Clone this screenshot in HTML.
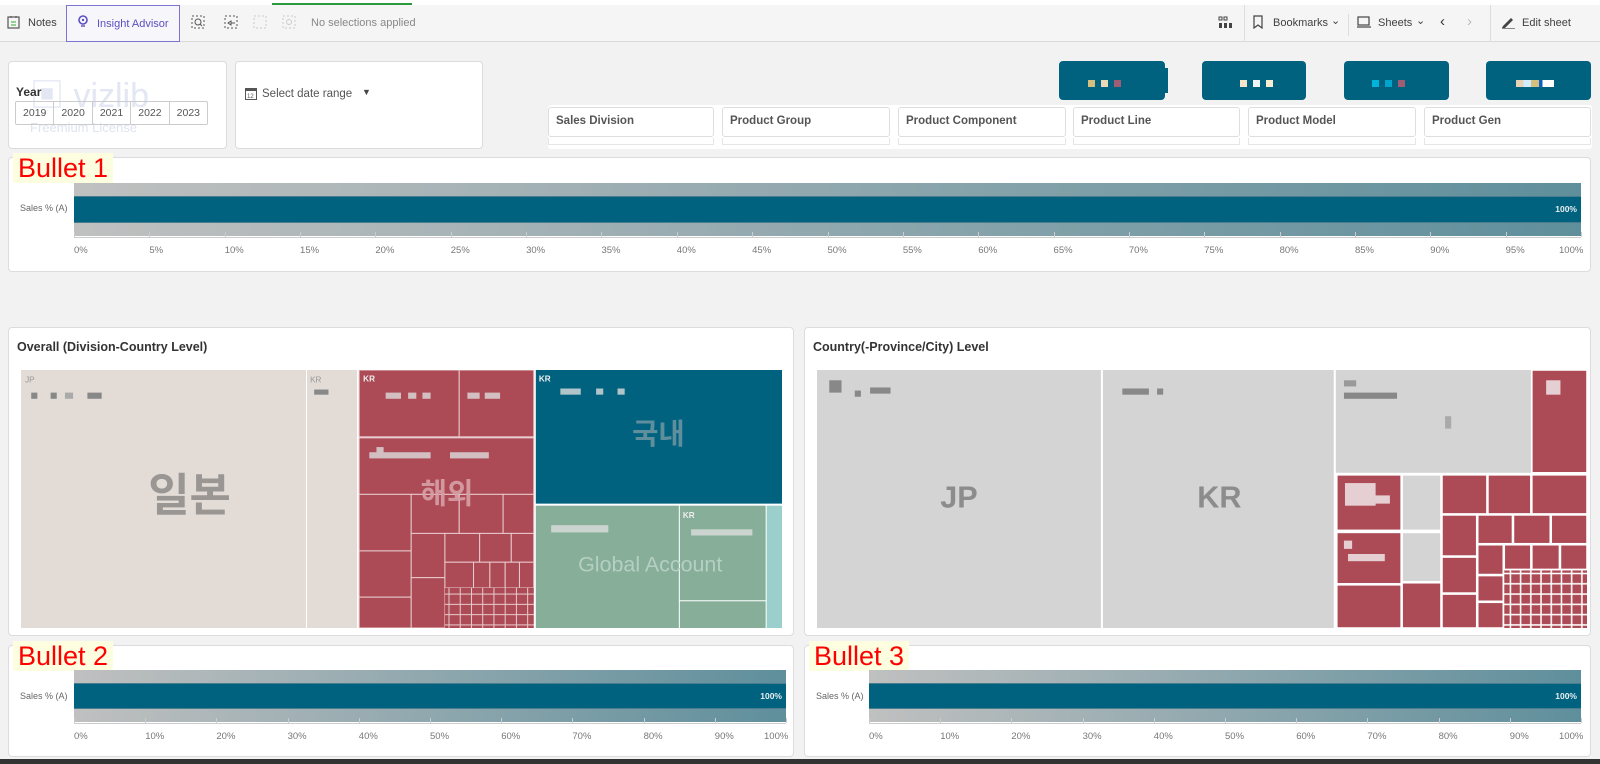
<!DOCTYPE html>
<html><head><meta charset="utf-8"><style>
*{box-sizing:border-box;margin:0;padding:0}
body{width:1600px;height:764px;overflow:hidden;background:#f2f2f2;font-family:"Liberation Sans","Noto Sans CJK KR",sans-serif;position:relative;color:#404040}
.a{position:absolute}
.card{position:absolute;background:#fff;border:1px solid #dcdcdc;border-radius:4px}
.tb{font-size:11px;color:#404040}
.filt{position:absolute;top:107px;height:30px;background:#fff;border:1px solid #dedede;border-radius:3px;font-size:11.5px;font-weight:bold;color:#555;padding:7px 7px}
.filt:after{content:"";position:absolute;left:-1px;right:-1px;bottom:-9px;height:6px;border:1px solid #e6e6e6;border-top:0;background:#fff}
.tbtn{position:absolute;top:61px;height:39px;background:#00627f;border-radius:4px}
.sq{position:absolute;top:19px;width:7px;height:7px}
.blabel{position:absolute;background:#fdfddf;color:#f00;font-size:27px;padding:0 5px;line-height:30px}
.bar{position:absolute}
.bar .bg{position:absolute;left:0;right:0;top:0;bottom:0;background:linear-gradient(90deg,#c0c0c0,#5f8f9c)}
.bar .fg{position:absolute;left:0;right:0;background:#00627f;border-top:1px solid #4a7e8e;border-bottom:1px solid #4a7e8e}
.bar .v{position:absolute;right:4px;color:#e8eef0;font-size:8.5px;font-weight:bold}
.ax{position:absolute;font-size:9.5px;color:#777}
.tick{position:absolute;width:1px;height:5px;background:#ccc}
.ylab{position:absolute;font-size:9px;color:#666}
</style></head><body>
<div class="a" style="left:0;top:0;width:1600px;height:5px;background:#fff"></div>
<div class="a" style="left:272px;top:3px;width:140px;height:2px;background:#2a9a3a"></div>
<div class="a" style="left:0;top:5px;width:1600px;height:37px;background:#f5f5f5;border-bottom:1px solid #d9d9d9"></div>
<svg class="a" style="left:7px;top:15px" width="13" height="14" viewBox="0 0 13 14"><rect x="1" y="2" width="11" height="11" fill="none" stroke="#555" stroke-width="1.2"/><line x1="4" y1="1" x2="4" y2="3" stroke="#555"/><line x1="9" y1="1" x2="9" y2="3" stroke="#555"/><line x1="4" y1="7" x2="9" y2="7" stroke="#3a3"/><line x1="4" y1="10" x2="9" y2="10" stroke="#3a3"/></svg>
<div class="a tb" style="left:28px;top:17px">Notes</div>
<div class="a" style="left:66px;top:5px;width:114px;height:37px;border:1px solid #7b74d0;background:#f7f7fb"></div>
<svg class="a" style="left:77px;top:15px" width="12" height="13" viewBox="0 0 12 13"><circle cx="6" cy="5" r="4" fill="none" stroke="#5a4fc0" stroke-width="1.6"/><circle cx="6" cy="5" r="1.2" fill="#5a4fc0"/><line x1="4" y1="11" x2="8" y2="11" stroke="#5a4fc0" stroke-width="1.4"/></svg>
<div class="a tb" style="left:97px;top:18px;color:#5a4fc0">Insight Advisor</div>
<svg class="a" style="left:191px;top:15px" width="110" height="14" viewBox="0 0 110 14"><g fill="none" stroke-dasharray="2 2"><rect x="1" y="1" width="12" height="12" stroke="#555"/><rect x="34" y="1" width="12" height="12" stroke="#555"/><rect x="63" y="1" width="12" height="12" stroke="#ccc"/><rect x="92" y="1" width="12" height="12" stroke="#ccc"/></g><circle cx="7" cy="7" r="3" fill="none" stroke="#555"/><line x1="9" y1="9" x2="11" y2="11" stroke="#555"/><path d="M37 8 l3-2 v4 z M40 8 h4" stroke="#555" fill="none"/><circle cx="98" cy="7" r="2.5" fill="none" stroke="#ccc"/></svg>
<div class="a tb" style="left:311px;top:17px;color:#888">No selections applied</div>
<svg class="a" style="left:1218px;top:16px" width="14" height="13" viewBox="0 0 14 13"><rect x="1" y="1" width="3" height="3" fill="none" stroke="#444"/><rect x="6" y="1" width="3" height="3" fill="none" stroke="#444"/><rect x="1" y="7" width="3" height="5" fill="#444"/><rect x="6" y="7" width="3" height="5" fill="#444"/><rect x="11" y="7" width="3" height="5" fill="#444"/></svg>
<div class="a" style="left:1244px;top:5px;width:1px;height:37px;background:#ddd"></div>
<svg class="a" style="left:1253px;top:15px" width="10" height="14"><path d="M1 1h8v12l-4-3-4 3z" fill="none" stroke="#444" stroke-width="1.2"/></svg>
<div class="a tb" style="left:1273px;top:17px">Bookmarks</div>
<div class="a tb" style="left:1331px;top:14px;font-size:11px">&#8964;</div>
<div class="a" style="left:1348px;top:14px;width:1px;height:22px;background:#ddd"></div>
<svg class="a" style="left:1357px;top:16px" width="14" height="12"><rect x="1" y="1" width="11" height="8" fill="none" stroke="#444" stroke-width="1.2"/><line x1="0" y1="11" x2="14" y2="11" stroke="#444" stroke-width="1.2"/></svg>
<div class="a tb" style="left:1378px;top:17px">Sheets</div>
<div class="a tb" style="left:1416px;top:14px">&#8964;</div>
<div class="a" style="left:1440px;top:13px;font-size:15px;color:#333">&#8249;</div>
<div class="a" style="left:1467px;top:13px;font-size:15px;color:#bbb">&#8250;</div>
<div class="a" style="left:1490px;top:5px;width:1px;height:37px;background:#ddd"></div>
<svg class="a" style="left:1501px;top:15px" width="14" height="14"><path d="M2 11 L10 3 L12 5 L4 13 L1 13 Z" fill="#444"/><line x1="1" y1="13.5" x2="14" y2="13.5" stroke="#888"/></svg>
<div class="a tb" style="left:1522px;top:17px">Edit sheet</div>

<div class="card" style="left:8px;top:61px;width:219px;height:88px"></div>
<div class="a" style="left:30px;top:68px;font-size:34px;color:#e3e6f3">&#9635; vizlib</div>
<div class="a" style="left:30px;top:120px;font-size:13px;color:#dfe3f0">Freemium License</div>
<div class="a" style="left:16px;top:85px;font-size:12px;font-weight:bold;color:#333">Year</div>
<div class="a" style="left:15px;top:101px;width:193px;height:24px;border:1px solid #ccc;border-radius:2px;display:flex;font-size:10.5px;color:#555">
<div style="flex:1;text-align:center;line-height:22px;border-right:1px solid #ccc">2019</div><div style="flex:1;text-align:center;line-height:22px;border-right:1px solid #ccc">2020</div><div style="flex:1;text-align:center;line-height:22px;border-right:1px solid #ccc">2021</div><div style="flex:1;text-align:center;line-height:22px;border-right:1px solid #ccc">2022</div><div style="flex:1;text-align:center;line-height:22px">2023</div></div>
<div class="card" style="left:235px;top:61px;width:248px;height:88px"></div>
<svg class="a" style="left:245px;top:87px" width="12" height="13"><rect x="0.5" y="1.5" width="11" height="11" fill="none" stroke="#555"/><rect x="0.5" y="1.5" width="11" height="2.5" fill="#555"/><text x="2" y="11" font-size="6" fill="#555" font-family="Liberation Sans">12</text></svg>
<div class="a" style="left:262px;top:88px;font-size:11.5px;color:#555">Select date range</div>
<div class="a" style="left:362px;top:87px;font-size:9px;color:#444">&#9660;</div>

<div class="tbtn" style="left:1059px;width:106px"><div class="sq" style="left:29px;background:#d4c07e"></div><div class="sq" style="left:42px;background:#ead8b8"></div><div class="sq" style="left:55px;background:#9e5d72"></div></div>
<div class="a" style="left:1162px;top:68px;width:6px;height:25px;background:#00627f"></div>
<div class="tbtn" style="left:1202px;width:104px"><div class="sq" style="left:38px;background:#f4e4cb"></div><div class="sq" style="left:51px;background:#eef4f5"></div><div class="sq" style="left:64px;background:#f8ecd2"></div></div>
<div class="tbtn" style="left:1344px;width:105px"><div class="sq" style="left:28px;background:#00b4da"></div><div class="sq" style="left:41px;background:#00a4cc"></div><div class="sq" style="left:54px;background:#9e5d72"></div></div>
<div class="tbtn" style="left:1486px;width:105px"><div class="sq" style="left:30px;width:38px;background:linear-gradient(90deg,#e8d2b6 20%,#cef 20%,#cef 40%,#d4c07e 40%,#d4c07e 60%,#1060c0 60%,#1060c0 70%,#fff 70%)"></div></div>
<div class="a" style="left:548px;top:105px;width:1044px;height:44px;background:#fff;border-radius:3px"></div>
<div class="filt" style="left:548px;width:166px">Sales Division</div>
<div class="filt" style="left:722px;width:168px">Product Group</div>
<div class="filt" style="left:898px;width:168px">Product Component</div>
<div class="filt" style="left:1073px;width:167px">Product Line</div>
<div class="filt" style="left:1248px;width:168px">Product Model</div>
<div class="filt" style="left:1424px;width:167px">Product Gen</div>

<div class="card" style="left:8px;top:157px;width:1583px;height:115px"></div>
<div class="blabel" style="left:13px;top:153px">Bullet 1</div>
<div class="ylab" style="left:20px;top:203px">Sales % (A)</div>
<div class="bar" style="left:74px;top:183px;width:1507px;height:53px"><div class="bg"></div><div class="fg" style="top:13px;height:27px"></div><div class="v" style="top:21px">100%</div></div>
<div class="a" style="left:74px;top:237px;width:1507px;height:1px;background:#ccc"></div>
<div id="ax1"></div>

<div class="card" style="left:8px;top:327px;width:786px;height:309px"></div>
<div class="a" style="left:17px;top:340px;font-size:12.5px;font-weight:bold;color:#333">Overall (Division-Country Level)</div>
<div class="card" style="left:804px;top:327px;width:787px;height:309px"></div>
<div class="a" style="left:813px;top:340px;font-size:12.5px;font-weight:bold;color:#333">Country(-Province/City) Level</div>

<svg class="a" style="left:21px;top:370px" width="761" height="258" viewBox="21 362 745 251" preserveAspectRatio="none">
<defs><pattern id="g" width="11" height="10" patternUnits="userSpaceOnUse"><rect width="11" height="10" fill="#ac4b55" stroke="#e8c9cc" stroke-width="1"/></pattern></defs>
<rect x="21" y="362" width="279" height="251" fill="#e3dcd6"/>
<rect x="301" y="362" width="49" height="251" fill="#e3dcd6"/>
<g fill="#ac4b55" stroke="#e8c9cc" stroke-width="1">
<rect x="352" y="362" width="98" height="65"/><rect x="450" y="362" width="73" height="65"/>
<rect x="352" y="428" width="171" height="55"/>
<rect x="352" y="483" width="51" height="55"/><rect x="352" y="538" width="51" height="45"/><rect x="352" y="583" width="51" height="30"/>
<rect x="403" y="483" width="47" height="38"/><rect x="450" y="483" width="43" height="38"/><rect x="493" y="483" width="30" height="38"/>
<rect x="403" y="521" width="33" height="43"/><rect x="436" y="521" width="34" height="28"/><rect x="470" y="521" width="31" height="28"/><rect x="501" y="521" width="22" height="28"/>
<rect x="403" y="564" width="33" height="49"/><rect x="436" y="549" width="28" height="25"/><rect x="464" y="549" width="16" height="25"/><rect x="480" y="549" width="15" height="25"/><rect x="495" y="549" width="14" height="25"/><rect x="509" y="549" width="14" height="25"/>
</g>
<rect x="436" y="574" width="87" height="39" fill="url(#g)"/>
<rect x="525" y="362" width="241" height="130" fill="#00627f"/>
<rect x="525" y="494" width="140" height="119" fill="#86ae99"/>
<rect x="666" y="494" width="84" height="92" fill="#86ae99"/>
<rect x="666" y="587" width="84" height="26" fill="#86ae99"/>
<rect x="751" y="494" width="15" height="119" fill="#9bcfcb"/>
<g font-family="Liberation Sans" font-size="8" font-weight="bold" fill="#eee"><text x="25" y="374" fill="#999" font-weight="normal">JP</text><text x="304" y="374" fill="#999" font-weight="normal">KR</text><text x="356" y="373">KR</text><text x="528" y="373">KR</text><text x="669" y="506">KR</text></g>
<g fill="#888"><rect x="31" y="384" width="6" height="6"/><rect x="50" y="384" width="6" height="6"/><rect x="64" y="384" width="8" height="6" fill="#aaa"/><rect x="86" y="384" width="14" height="6"/><rect x="308" y="381" width="14" height="5"/></g>
<g fill="#ddd" opacity=".8"><rect x="378" y="384" width="15" height="6"/><rect x="400" y="384" width="8" height="6"/><rect x="414" y="384" width="8" height="6"/><rect x="458" y="384" width="12" height="6"/><rect x="475" y="384" width="15" height="6"/><rect x="369" y="437" width="7" height="6"/><rect x="362" y="442" width="60" height="6"/><rect x="441" y="442" width="38" height="6"/><rect x="549" y="380" width="20" height="6"/><rect x="584" y="380" width="7" height="6"/><rect x="605" y="380" width="7" height="6"/><rect x="540" y="513" width="56" height="7"/><rect x="677" y="517" width="60" height="6"/></g>
<g font-family="Liberation Sans,Noto Sans CJK KR,sans-serif" font-weight="bold" text-anchor="middle">
<text x="186" y="499" font-size="44" fill="#9a9694">일본</text>
<text x="438" y="492" font-size="28" fill="#d8a0a6" opacity=".9">해외</text>
<text x="645" y="434" font-size="28" fill="#5f8f9c">국내</text>
<text x="637" y="558" font-size="21" font-weight="normal" fill="#b5cfc2">Global Account</text>
</g>
</svg>

<svg class="a" style="left:817px;top:370px" width="770" height="258" viewBox="801 362 754 251" preserveAspectRatio="none">
<defs><pattern id="g2" width="10" height="10" patternUnits="userSpaceOnUse"><rect width="10" height="10" fill="#ac4b55" stroke="#fff" stroke-width="1.5"/></pattern></defs>
<rect x="801" y="362" width="278" height="251" fill="#d4d4d4"/>
<rect x="1081" y="362" width="226" height="251" fill="#d4d4d4"/>
<rect x="1309" y="362" width="191" height="100" fill="#d4d4d4"/>
<g fill="#ac4b55" stroke="#fff" stroke-width="1.5">
<rect x="1501" y="362" width="54" height="100"/>
<rect x="1310" y="464" width="63" height="54"/><rect x="1310" y="520" width="63" height="50"/><rect x="1310" y="571" width="63" height="42"/><rect x="1374" y="569" width="38" height="44"/>
<rect x="1413" y="464" width="44" height="38"/><rect x="1458" y="464" width="42" height="38"/><rect x="1501" y="464" width="54" height="38"/>
<rect x="1413" y="503" width="34" height="40"/><rect x="1448" y="503" width="34" height="28"/><rect x="1483" y="503" width="36" height="28"/><rect x="1520" y="503" width="35" height="28"/>
<rect x="1413" y="544" width="34" height="35"/><rect x="1413" y="580" width="34" height="33"/>
<rect x="1448" y="532" width="25" height="29"/><rect x="1474" y="532" width="26" height="24"/><rect x="1501" y="532" width="27" height="24"/><rect x="1529" y="532" width="26" height="24"/>
<rect x="1448" y="562" width="25" height="25"/><rect x="1448" y="588" width="25" height="25"/>
</g>
<g fill="#d4d4d4" stroke="#fff" stroke-width="1.5"><rect x="1374" y="464" width="38" height="54"/><rect x="1374" y="520" width="38" height="48"/></g>
<rect x="1474" y="557" width="81" height="56" fill="url(#g2)"/>
<g fill="#888"><rect x="813" y="372" width="12" height="12"/><rect x="838" y="382" width="6" height="6"/><rect x="853" y="379" width="20" height="6"/><rect x="1100" y="380" width="26" height="6"/><rect x="1134" y="380" width="6" height="6"/><rect x="1317" y="372" width="12" height="6" fill="#999"/><rect x="1317" y="384" width="52" height="6"/><rect x="1416" y="407" width="6" height="12" fill="#aaa"/></g>
<g fill="#e6cfd2"><rect x="1515" y="372" width="14" height="14"/><rect x="1318" y="472" width="30" height="22"/><rect x="1344" y="484" width="18" height="8"/><rect x="1317" y="528" width="8" height="8"/><rect x="1321" y="541" width="36" height="7"/></g>
<g font-family="Liberation Sans,sans-serif" font-weight="bold" text-anchor="middle" fill="#8c8c8c" font-size="30">
<text x="940" y="496">JP</text><text x="1195" y="496">KR</text></g>
</svg>

<div class="card" style="left:8px;top:645px;width:786px;height:112px"></div>
<div class="blabel" style="left:13px;top:641px">Bullet 2</div>
<div class="ylab" style="left:20px;top:691px">Sales % (A)</div>
<div class="bar" style="left:74px;top:670px;width:712px;height:52px"><div class="bg"></div><div class="fg" style="top:13px;height:26px"></div><div class="v" style="top:21px">100%</div></div>
<div class="a" style="left:74px;top:723px;width:712px;height:1px;background:#ccc"></div>
<div class="card" style="left:804px;top:645px;width:787px;height:112px"></div>
<div class="blabel" style="left:809px;top:641px">Bullet 3</div>
<div class="ylab" style="left:816px;top:691px">Sales % (A)</div>
<div class="bar" style="left:869px;top:670px;width:712px;height:52px"><div class="bg"></div><div class="fg" style="top:13px;height:26px"></div><div class="v" style="top:21px">100%</div></div>
<div class="a" style="left:869px;top:723px;width:712px;height:1px;background:#ccc"></div>
<div id="axes"></div>
<div class="a" style="left:0;top:759px;width:1600px;height:5px;background:#333"></div>
<script>
function ax(x0,w,y,n,step){var h='';for(var i=0;i<=n;i++){var x=x0+w*i/n;h+='<div class="tick" style="left:'+x+'px;top:'+(y-13)+'px"></div><div class="ax" style="left:'+(x-(i==n?22:0))+'px;top:'+y+'px">'+(i*step)+'%</div>';}return h;}
document.getElementById('ax1').innerHTML=ax(74,1507,245,20,5);
document.getElementById('axes').innerHTML=ax(74,712,731,10,10)+ax(869,712,731,10,10);
</script>
</body></html>
